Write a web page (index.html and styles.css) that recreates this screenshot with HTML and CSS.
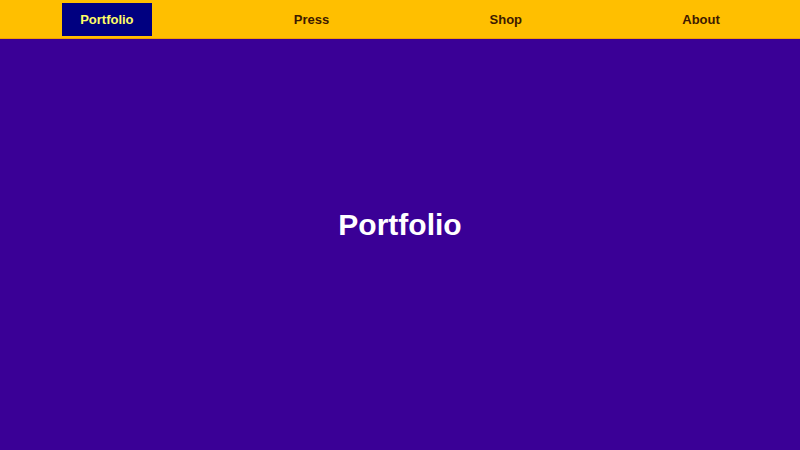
FILE: index.html
```html
<!DOCTYPE html>
<html>
<head>
<meta charset="utf-8">
<link rel="stylesheet" href="styles.css">
</head>
<body>
<nav class="nav">
  <a class="nav-item active">Portfolio</a>
  <a class="nav-item">Press</a>
  <a class="nav-item">Shop</a>
  <a class="nav-item">About</a>
</nav>
<main class="main">
  <h1 class="title">Portfolio</h1>
</main>
</body>
</html>
```
FILE: styles.css
```css
html, body {
  margin: 0;
  padding: 0;
  height: 100%;
}
body {
  font-family: "Liberation Sans", Arial, sans-serif;
  background: #3a0096;
  display: flex;
  flex-direction: column;
}
.nav {
  background: #ffbf00;
  height: 39px;
  box-sizing: border-box;
  padding: 3px 0 2px;
  display: flex;
  justify-content: space-around;
  align-items: stretch;
  border-bottom: 1px solid #f0a000;
}
.nav-item {
  display: flex;
  align-items: center;
  padding: 0 18px;
  font-size: 13px;
  font-weight: bold;
  color: #3d1a00;
}
.nav-item.active {
  background: #000080;
  color: #ffff66;
}
.main {
  flex: 1;
  display: flex;
  align-items: center;
  justify-content: center;
  padding-bottom: 39px;
}
.title {
  margin: 0;
  color: #ffffff;
  font-size: 30px;
  font-weight: bold;
}
```
